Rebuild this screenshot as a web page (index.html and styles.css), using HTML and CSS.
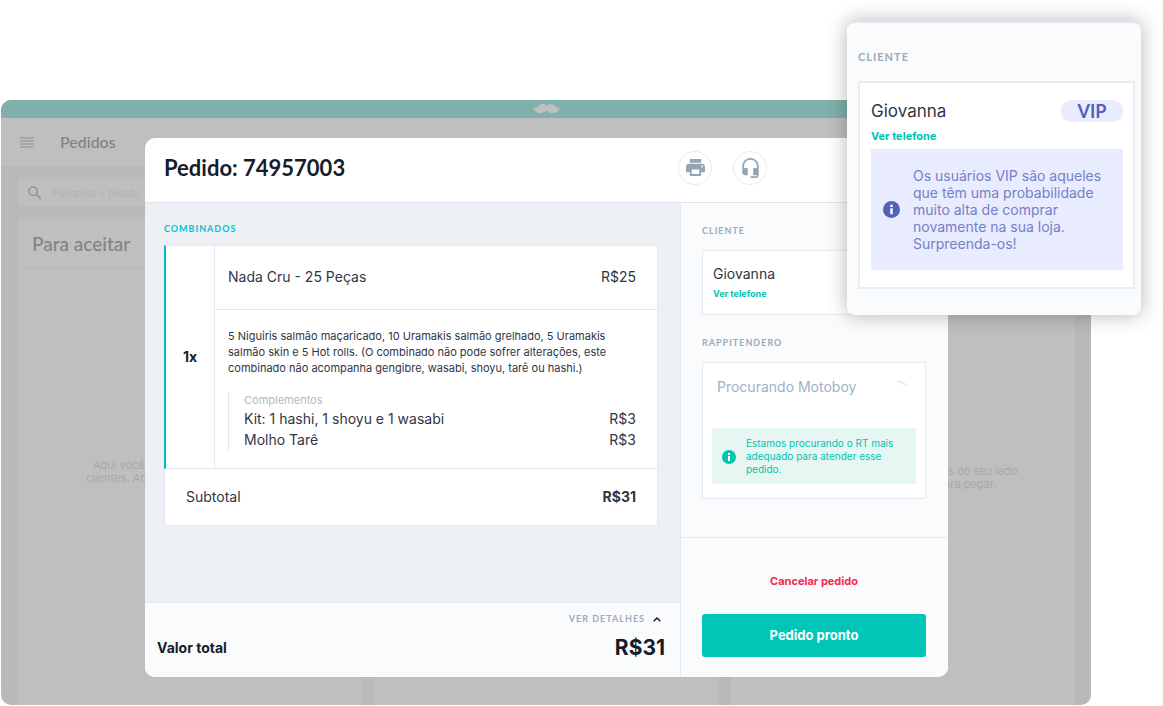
FILE: index.html
```
<!doctype html>
<html lang="pt-BR">
<head>
<meta charset="utf-8">
<title>Pedidos</title>
<link rel="stylesheet" href="styles.css">
</head>
<body>
<div class="app">
  <div class="topbar">
    <svg class="mustache" viewBox="0 0 27 10"><path d="M13.500 2C12.500 .5 11 0 9.500 0C7 0 5.800 1.500 4.300 2.800C3 3.900 1.500 4 0 3.300C1 7 4 9.500 8 9.200C11 9 12.500 7.500 13.500 6.500C14.500 7.500 16 9 19 9.200C23 9.500 26 7 27 3.300C25.500 4 24 3.900 22.700 2.800C21.200 1.500 20 0 17.500 0C16 0 14.500 .5 13.500 2Z"/></svg>
  </div>
  <div class="nav">
    <button class="menu" aria-label="Menu">
      <svg viewBox="0 0 14 11"><path d="M0 1H14M0 4H14M0 7H14M0 10H14"/></svg>
    </button>
    <h1>Pedidos</h1>
  </div>
  <div class="board">
    <label class="search">
      <svg viewBox="0 0 14 14"><circle cx="5.200" cy="5.200" r="4.200"/><path d="M8.400 8.400L13 13"/></svg>
      <input type="text" placeholder="Pesquise o pedido" aria-label="Pesquise o pedido">
    </label>
    <div class="columns">
      <div class="column">
        <h2>Para aceitar</h2>
        <p>Aqui você verá os novos pedidos dos<br>clientes. Aceite-os para poder começar.</p>
      </div>
      <div class="column"></div>
      <div class="column">
        <h2></h2>
        <p class="pickup">Aqui você verá os entregadores do seu lado<br>quando chegarem à loja para pegar.</p>
      </div>
    </div>
  </div>

  <div class="modal">
    <div class="modal-head">
      <h2>Pedido: 74957003</h2>
      <button class="round" aria-label="Imprimir">
        <svg class="icon-print" viewBox="2 3 20 18"><path d="M19 8H5c-1.660 0-3 1.340-3 3v6h4v4h12v-4h4v-6c0-1.660-1.340-3-3-3zm-3 11H8v-5h8v5zm3-7c-.55 0-1-.45-1-1s.45-1 1-1 1 .45 1 1-.45 1-1 1zm-1-9H6v4h12V3z"/></svg>
      </button>
      <button class="round" aria-label="Suporte">
        <svg class="icon-headset" viewBox="3 1 18 22"><path d="M12 1c-4.970 0-9 4.030-9 9v7c0 1.660 1.340 3 3 3h3v-8H5v-2c0-3.870 3.130-7 7-7s7 3.130 7 7v2h-4v8h4v1h-7v2h6c1.660 0 3-1.340 3-3V10c0-4.970-4.030-9-9-9z"/></svg>
      </button>
    </div>
    <div class="modal-body">
      <div class="order">
        <div class="items">
          <h3 class="label teal">COMBINADOS</h3>
          <div class="item">
            <div class="qty">1x</div>
            <div class="info">
              <div class="line name"><span>Nada Cru - 25 Peças</span><span>R$25</span></div>
              <div class="details">
                <p>5 Niguiris salmão maçaricado, 10 Uramakis salmão grelhado, 5 Uramakis<br>salmão skin e 5 Hot rolls. (O combinado não pode sofrer alterações, este<br>combinado não acompanha gengibre, wasabi, shoyu, tarê ou hashi.)</p>
                <div class="extras">
                  <small>Complementos</small>
                  <div class="line"><span>Kit: 1 hashi, 1 shoyu e 1 wasabi</span><span>R$3</span></div>
                  <div class="line"><span>Molho Tarê</span><span>R$3</span></div>
                </div>
              </div>
            </div>
          </div>
          <div class="line subtotal"><span>Subtotal</span><b>R$31</b></div>
        </div>
        <div class="total">
          <button class="toggle">VER DETALHES
            <svg viewBox="0 0 8 5"><path d="M.7 4.300L4 1L7.300 4.300"/></svg>
          </button>
          <div class="line"><b>Valor total</b><strong>R$31</strong></div>
        </div>
      </div>
      <div class="side">
        <div class="people">
          <h3 class="label">CLIENTE</h3>
          <div class="box client">
            <span>Giovanna</span>
            <a href="#">Ver telefone</a>
          </div>
          <h3 class="label">RAPPITENDERO</h3>
          <div class="box courier">
            <div class="line"><span>Procurando Motoboy</span>
              <svg class="spinner" viewBox="0 0 12 16"><path d="M1 2Q6 2.500 10 6"/></svg>
            </div>
            <div class="notice">
              <svg class="info-icon" viewBox="0 0 14 14"><circle cx="7" cy="7" r="7"/><path d="M6 3h2v2H6zM6 6h2v5H6z"/></svg>
              <p>Estamos procurando o RT mais<br>adequado para atender esse<br>pedido.</p>
            </div>
          </div>
        </div>
        <div class="actions">
          <button class="cancel">Cancelar pedido</button>
          <button class="ready">Pedido pronto</button>
        </div>
      </div>
    </div>
  </div>
</div>

<div class="vip-card">
  <h3 class="label">CLIENTE</h3>
  <div class="box">
    <div class="line"><span>Giovanna</span><span class="badge">VIP</span></div>
    <a href="#">Ver telefone</a>
    <div class="notice">
      <svg class="info-icon" viewBox="0 0 14 14"><circle cx="7" cy="7" r="7"/><path d="M6 3h2v2H6zM6 6h2v5H6z"/></svg>
      <p>Os usuários VIP são aqueles<br>que têm uma probabilidade<br>muito alta de comprar<br>novamente na sua loja.<br>Surpreenda-os!</p>
    </div>
  </div>
</div>
</body>
</html>
```
FILE: styles.css
```
* {
  margin: 0;
  padding: 0;
  box-sizing: border-box;
}

body {
  position: relative;
  min-height: 100vh;
  padding: 100px 72px 1px 1px;
  background: #fff;
  color: #303645;
  font: 14px/20px Inter, sans-serif;
}

button {
  border: 0;
  background: none;
  font: inherit;
  cursor: pointer;
}

a {
  color: #00c4b0;
  font-weight: bold;
  text-decoration: none;
}

svg {
  display: block;
  flex: none;
}

.line {
  display: flex;
  justify-content: space-between;
  align-items: center;
}

.label {
  color: #9aabbb;
  font: bold 9px/12px Lato, sans-serif;
  letter-spacing: 1px;
}

.teal {
  color: #00c3d4;
}

/* board behind the modal */
.app {
  position: relative;
  display: flex;
  flex-direction: column;
  min-height: calc(100vh - 101px);
  border-radius: 10px;
  background: #b9b9b9;
}

.topbar {
  display: flex;
  justify-content: center;
  height: 18px;
  padding-top: 4px;
  border-radius: 10px 10px 0 0;
  background: #80b0ab;
}

.mustache {
  width: 27px;
  height: 10px;
  fill: #bfbfbf;
}

.nav {
  display: flex;
  align-items: center;
  gap: 26px;
  height: 48px;
  padding-left: 19px;
  background: #bfbfbf;
}

.menu svg {
  width: 14px;
  height: 11px;
  stroke: #8c8f93;
}

.nav h1 {
  color: #808387;
  font: 500 16px/20px Lato, sans-serif;
}

.board {
  flex: 1;
  display: flex;
  flex-direction: column;
  gap: 13px;
  padding: 13px 16px 0 17px;
}

.search {
  display: flex;
  align-items: center;
  gap: 11px;
  width: 344px;
  height: 27px;
  padding-left: 10px;
  background: #bfbfbf;
}

.search svg {
  width: 14px;
  height: 14px;
  fill: none;
  stroke: #8f9397;
  stroke-width: 1.5;
}

.search input {
  border: 0;
  background: none;
  font: 10px/14px Inter, sans-serif;
}

.search input::placeholder {
  color: #afb2b5;
}

.columns {
  flex: 1;
  display: grid;
  grid-template-columns: repeat(3, 1fr);
  gap: 12px;
}

.column {
  background: #bfbfbf;
}

.column h2 {
  height: 50px;
  padding-left: 14px;
  border-bottom: 1px solid #b8b8b8;
  color: #808387;
  font: 500 19px/50px Lato, sans-serif;
}

.column p {
  padding-top: 190px;
  color: #a6a9ac;
  font-size: 11px;
  line-height: 13px;
  text-align: center;
}

.column .pickup {
  padding-top: 196px;
}

/* order modal */
.modal {
  position: absolute;
  top: 38px;
  left: 144px;
  right: 143px;
  bottom: 28px;
  display: flex;
  flex-direction: column;
  overflow: hidden;
  border-radius: 10px;
  background: #fff;
}

.modal-head {
  display: flex;
  align-items: center;
  gap: 21px;
  height: 65px;
  padding: 0 181px 5px 19px;
  border-bottom: 1px solid #dfe7ee;
}

.modal-head h2 {
  margin-right: auto;
  color: #161c2a;
  font: bold 22px/28px Lato, sans-serif;
}

.round {
  display: flex;
  align-items: center;
  justify-content: center;
  width: 34px;
  height: 34px;
  border: 1px solid #e6ebf2;
  border-radius: 50%;
}

.round svg {
  fill: #93a5b5;
}

.icon-print {
  width: 19px;
  height: 17px;
}

.icon-headset {
  width: 17px;
  height: 20px;
}

.modal-body {
  flex: 1;
  display: grid;
  grid-template-columns: 1fr 268px;
}

.order {
  display: flex;
  flex-direction: column;
  background: #edf0f4;
}

.items {
  flex: 1;
  padding: 20px 22px 20px 19px;
}

.item {
  display: flex;
  margin-top: 10px;
  border: 1px solid #e2e9f0;
  border-left: 2px solid #00b9cc;
  background: #fff;
}

.qty {
  display: flex;
  align-items: center;
  justify-content: center;
  width: 49px;
  border-right: 1px solid #e2e9f0;
  color: #161c2a;
  font-weight: bold;
}

.info {
  flex: 1;
}

.name {
  height: 64px;
  padding: 0 21px 2px 13px;
  border-bottom: 1px solid #e2e9f0;
}

.details {
  padding: 18px 21px 18px 13px;
}

.details p {
  font-size: 11px;
  line-height: 16px;
  white-space: nowrap;
}

.extras {
  margin-top: 16px;
  padding-left: 15px;
  border-left: 1px solid #dfe7ee;
}

.extras small {
  display: block;
  color: #adbccb;
  font-size: 11px;
  line-height: 16px;
}

.extras .line {
  height: 21px;
}

.subtotal {
  height: 57px;
  padding: 0 21px;
  border: 1px solid #e2e9f0;
  border-top: 0;
  background: #fff;
}

.total {
  height: 75px;
  padding: 9px 15px 0 12px;
  border-top: 1px solid #e2e9f0;
  background: #fafbfd;
  color: #161c2a;
}

.toggle {
  display: flex;
  align-items: center;
  gap: 8px;
  margin: 0 4px 0 auto;
  color: #9aabbb;
  font: bold 9px/14px Lato, sans-serif;
  letter-spacing: 1px;
}

.toggle svg {
  width: 8px;
  height: 5px;
  fill: none;
  stroke: #161c2a;
  stroke-width: 1.5;
}

.total .line {
  margin-top: 8px;
}

.total strong {
  font: bold 21px/28px Inter, sans-serif;
}

.side {
  display: flex;
  flex-direction: column;
  border-left: 1px solid #e2e9f0;
  background: #fafbfd;
}

.people {
  flex: 1;
  padding: 22px 22px 20px 21px;
}

.box {
  border: 1px solid #e6ebf2;
  background: #fff;
}

.client {
  height: 65px;
  margin: 13px 0 22px;
  padding: 13px 10px;
}

.client a {
  display: block;
  font-size: 9px;
}

.courier {
  margin-top: 13px;
  padding: 14px 9px 14px;
}

.courier .line {
  padding: 0 17px 0 5px;
  color: #a2b1c0;
}

.courier .spinner {
  width: 12px;
  height: 16px;
  fill: none;
  stroke: #e6ebf2;
  stroke-width: 2;
}

.notice {
  display: flex;
  align-items: center;
}

.info-icon path {
  fill: #fff;
}

.courier .notice {
  gap: 10px;
  margin-top: 31px;
  padding: 9px 10px 8px;
  background: #e6f6f3;
  color: #00c4b0;
  font-size: 10px;
  line-height: 13px;
}

.courier .line {
  padding-right: 8px;
}

.courier .info-icon {
  width: 14px;
  height: 14px;
  fill: #00c4b0;
}

.actions {
  display: flex;
  flex-direction: column;
  height: 140px;
  padding: 33px 22px 20px 21px;
  border-top: 1px solid #e2e9f0;
}

.cancel {
  color: #f9284f;
  font-size: 11px;
  font-weight: bold;
}

.ready {
  height: 43px;
  margin-top: auto;
  padding-bottom: 2px;
  border-radius: 3px;
  background: #00c6b8;
  color: #fff;
  font-size: 13px;
  font-weight: bold;
}

/* enlarged client card */
.vip-card {
  position: absolute;
  top: 21px;
  right: 22px;
  width: 294px;
  padding: 28px 6px 26px 11px;
  border-top: 2px solid #e0e6ef;
  border-radius: 8px;
  background: #fafbfd;
  box-shadow: 0 0 20px rgba(0, 0, 0, 0.3);
}

.vip-card .label {
  font-size: 11px;
}

.vip-card .box {
  margin-top: 18px;
  padding: 17px 10px 17px 11px;
  border: 2px solid #e8edf4;
}

.vip-card .line {
  font-size: 17px;
}

.badge {
  width: 62px;
  border-radius: 10px;
  background: #e9ecfe;
  color: #5262ba;
  font: bold 18px/22px Lato, sans-serif;
  text-align: center;
}

.vip-card a {
  display: block;
  margin-top: 4px;
  font-size: 11px;
}

.vip-card .notice {
  gap: 13px;
  margin-top: 3px;
  padding: 18px 12px;
  background: #e9ecfe;
  color: #7480c8;
  line-height: 17px;
}

.vip-card .info-icon {
  width: 17px;
  height: 17px;
  fill: #5262ba;
}
```
